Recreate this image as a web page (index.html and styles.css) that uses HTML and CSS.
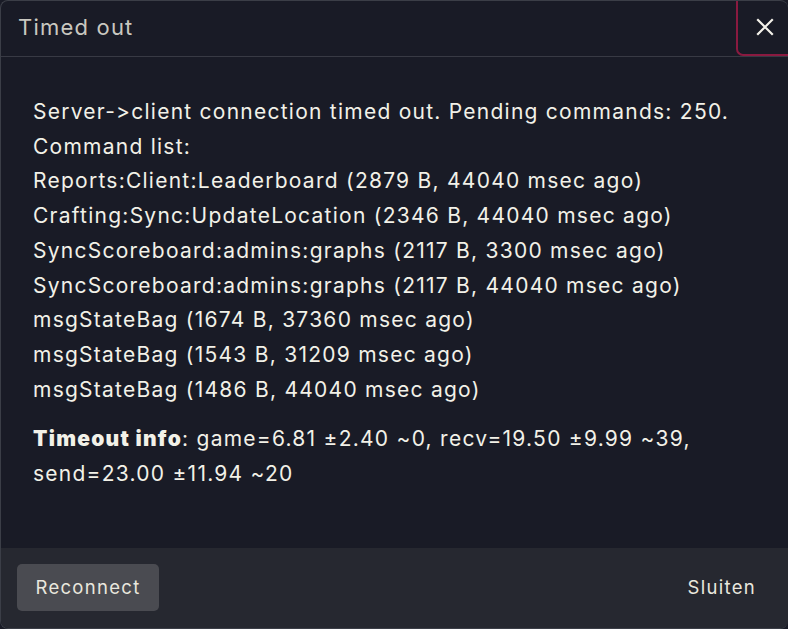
FILE: index.html
```html
<!DOCTYPE html>
<html>
<head>
<meta charset="utf-8">
<link rel="stylesheet" href="styles.css">
</head>
<body>
<div class="dialog">
  <div class="header">
    <div class="title">Timed out</div>
    <button class="close" aria-label="close">
      <svg width="18" height="18" viewBox="0 0 18 18"><path d="M2 2 L16 16 M16 2 L2 16" stroke="#f4f2ea" stroke-width="2.2" stroke-linecap="square"/></svg>
    </button>
  </div>
  <div class="body">
    <p class="lines">Server-&gt;client connection timed out. Pending commands: 250.<br>Command list:<br>Reports:Client:Leaderboard (2879 B, 44040 msec ago)<br>Crafting:Sync:UpdateLocation (2346 B, 44040 msec ago)<br>SyncScoreboard:admins:graphs (2117 B, 3300 msec ago)<br>SyncScoreboard:admins:graphs (2117 B, 44040 msec ago)<br>msgStateBag (1674 B, 37360 msec ago)<br>msgStateBag (1543 B, 31209 msec ago)<br>msgStateBag (1486 B, 44040 msec ago)</p>
    <p class="info"><strong>Timeout info</strong>: game=6.81 ±2.40 ~0, recv=19.50 ±9.99 ~39, send=23.00 ±11.94 ~20</p>
  </div>
  <div class="footer">
    <button class="btn btn-secondary">Reconnect</button>
    <button class="btn btn-link">Sluiten</button>
  </div>
</div>
</body>
</html>
```
FILE: styles.css
```css
* { box-sizing: border-box; }
html, body { margin: 0; padding: 0; background: #191b26; }
body {
  font-family: Inter, "Noto Sans", sans-serif;
  font-feature-settings: "calt" 0, "liga" 0;
  font-variant-ligatures: none;
}
.dialog {
  width: 788px;
  height: 629px;
  border: 1px solid #3b3e47;
  border-right: none;
  border-radius: 8px;
  background: #191b26;
  display: flex;
  flex-direction: column;
  overflow: hidden;
}
.header {
  height: 56px;
  display: flex;
  align-items: flex-start;
  justify-content: space-between;
  border-bottom: 1px solid #383a44;
  flex: none;
}
.title {
  padding: 11px 0 0 17px;
  font-size: 22px;
  letter-spacing: 1.2px;
  color: #c9c8c0;
  line-height: 30px;
}
.close {
  width: 54px;
  height: 57px;
  margin-top: -2px;
  margin-right: -2px;
  background: transparent;
  border: 2px solid #8a1a40;
  border-top: none;
  border-right: none;
  border-radius: 0 0 0 7px;
  display: flex;
  align-items: center;
  justify-content: center;
  padding: 0 0 0 2px;
  margin-bottom: -2px;
}
.body {
  flex: 1;
  padding: 38px 32px 0 32px;
  color: #f2f1e8;
  font-size: 21px;
  letter-spacing: 1.25px;
  line-height: 34.7px;
}
.body p { margin: 0; }
.info { margin-top: 15px !important; }
.info strong { font-weight: 900; }
.footer {
  height: 80px;
  flex: none;
  background: #262830;
  display: flex;
  align-items: center;
  justify-content: space-between;
  padding: 0 16px;
}
.btn {
  font-family: Inter, "Noto Sans", sans-serif;
  font-size: 18.5px;
  letter-spacing: 1.3px;
  color: #e9e7de;
  border: none;
  cursor: pointer;
}
.btn-secondary {
  background: #4a4b51;
  border-radius: 5px;
  width: 142px;
  height: 47px;
  margin-top: -2px;
}
.btn-link {
  background: transparent;
  padding: 0 16px;
  height: 47px;
  margin-top: -2px;
}
```
